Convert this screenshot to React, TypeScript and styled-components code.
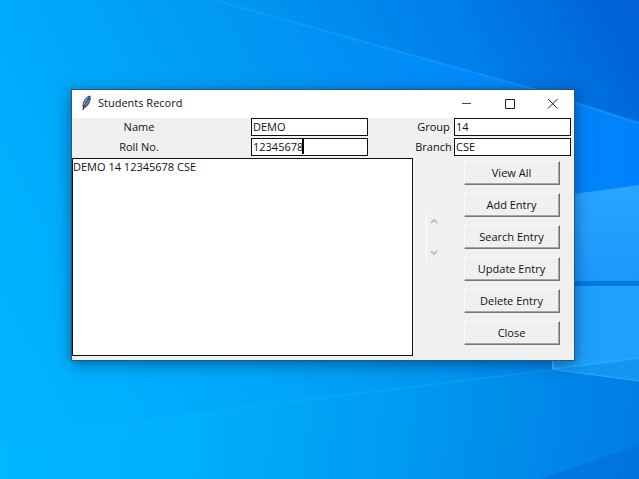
import React, { useState } from "react";
import styled, { createGlobalStyle } from "styled-components";

const GlobalStyle = createGlobalStyle`
  *, *::before, *::after { box-sizing: border-box; }
  body { margin: 0; }
  body, button, input, select {
    font-family: "Open Sans", "Noto Sans", sans-serif;
    font-size: 11px;
    line-height: 16px;
    color: #111;
  }
`;

const Desktop = styled.main`
  position: relative;
  min-height: 100vh;
  padding: 89px 64px 64px 71px;
  overflow: hidden;
  background: #0098f4;
`;

const Wallpaper = styled.svg`
  position: absolute;
  inset: 0;
  width: 100%;
  height: 100%;
`;

const Window = styled.section`
  position: relative;
  display: flex;
  flex-direction: column;
  border: 1px solid #24587c;
  background: #f0f0f0;
  box-shadow: 0 3px 14px rgba(0, 25, 70, 0.5);
`;

const TitleBar = styled.header`
  display: flex;
  align-items: center;
  height: 28px;
  padding: 0 0 2px 8px;
  background: #fff;
`;

const Title = styled.h1`
  flex: 1;
  margin: 0 0 0 6px;
  font-size: 11px;
  font-weight: 400;
`;

const CaptionButton = styled.button`
  display: grid;
  place-items: center;
  width: 43px;
  height: 26px;
  padding: 0;
  border: 0;
  background: transparent;
`;

const Body = styled.form`
  display: grid;
  grid-template-columns: 134fr 207fr 41px 117px;
  grid-template-rows: 18px 18px auto;
  row-gap: 2px;
  padding: 0 3px 4px 0;
`;

const FieldLabel = styled.label`
  align-self: center;
  text-align: center;
  white-space: nowrap;
`;

const EntryBox = styled.div`
  position: relative;
  justify-self: center;
  width: 117px;
`;

const Entry = styled.input`
  display: block;
  width: 100%;
  height: 18px;
  padding: 0 1px 2px;
  border: 1px solid #111;
  border-radius: 0;
  outline: 0;
  background: #fff;
`;

const Caret = styled.span`
  position: absolute;
  top: 1px;
  width: 2px;
  height: 15px;
  background: #000;
`;

const RecordList = styled.select`
  grid-column: 1 / 3;
  width: 100%;
  height: 100%;
  padding: 0;
  border: 1px solid #111;
  border-radius: 0;
  outline: 0;
  background: #fff;
  appearance: none;
  overflow: hidden;

  option {
    min-height: 14px;
    padding: 0;
    line-height: 14px;
  }
`;

const ScrollBar = styled.div`
  display: flex;
  flex-direction: column;
  justify-content: space-between;
  align-self: center;
  justify-self: center;
  width: 15px;
  height: 48px;
  margin-bottom: 40px;
  border-left: 1px solid #fff;
`;

const ScrollButton = styled.button`
  display: grid;
  place-items: center;
  width: 14px;
  height: 16px;
  padding: 0;
  border: 0;
  background: transparent;
`;

const Actions = styled.div`
  display: flex;
  flex-direction: column;
  align-items: center;
  gap: 8px;
  padding: 3px 2px 11px 0;
`;

const ActionButton = styled.button`
  width: 96px;
  height: 24px;
  padding: 0;
  border: 1px solid;
  border-color: #fafafa #747474 #747474 #fafafa;
  box-shadow: inset -1px -1px #a4a4a4;
  background: #f0f0f0;
`;

const actions = ["View All", "Add Entry", "Search Entry", "Update Entry", "Delete Entry", "Close"];

function WallpaperArt() {
  return (
    <Wallpaper viewBox="0 0 639 479" preserveAspectRatio="none" aria-hidden="true">
      <defs>
        <linearGradient id="sky" gradientUnits="userSpaceOnUse" x1="0" y1="330" x2="620" y2="0">
          <stop offset="0" stopColor="#00b4ff" />
          <stop offset="0.3" stopColor="#00a6f9" />
          <stop offset="0.55" stopColor="#0094f0" />
          <stop offset="0.8" stopColor="#007ce8" />
          <stop offset="1" stopColor="#0062d4" />
        </linearGradient>
        <linearGradient id="beam" x1="0" y1="0" x2="1" y2="0">
          <stop offset="0" stopColor="#009cfc" stopOpacity="0" />
          <stop offset="0.5" stopColor="#008ffc" stopOpacity="0.8" />
          <stop offset="1" stopColor="#0082fc" />
        </linearGradient>
        <linearGradient id="floor" gradientUnits="userSpaceOnUse" x1="0" y1="400" x2="639" y2="479">
          <stop offset="0" stopColor="#00b8ff" />
          <stop offset="0.3" stopColor="#00b0fa" />
          <stop offset="0.6" stopColor="#009cf2" />
          <stop offset="1" stopColor="#007ce4" />
        </linearGradient>
        <linearGradient id="pane" x1="0" y1="0" x2="0" y2="1">
          <stop offset="0" stopColor="#28a5ff" />
          <stop offset="1" stopColor="#1c98fb" />
        </linearGradient>
      </defs>
      <rect width="639" height="479" fill="url(#sky)" />
      <path d="M214 0 530 88 639 123V360H214Z" fill="url(#beam)" />
      <path d="M214 0 530 88 639 123" fill="none" stroke="#1c9cff" strokeWidth="2" opacity=".6" />
      <path d="M0 441 240 408 552 370 639 381V479H0Z" fill="url(#floor)" />
      <path d="M0 441 240 408 552 370" fill="none" stroke="#14b0ff" strokeWidth="2" opacity=".35" />
      <path d="M552 197 639 185V281H552Z" fill="url(#pane)" />
      <path d="M552 281H639V286H552Z" fill="#0078e6" />
      <path d="M552 286H639V381L552 370Z" fill="#1fa0fd" />
      <path d="M552 370 639 358V381Z" fill="#1694f2" />
      <path d="M553 350V369" fill="none" stroke="#20d0e0" strokeWidth="2" />
      <path d="M553 369 639 358" fill="none" stroke="#20b8f4" strokeWidth="2" opacity=".7" />
      <path d="M553 369 639 381" fill="none" stroke="#20b0fa" />
      <path d="M540 479 639 445V479Z" fill="#0070da" opacity=".7" />
    </Wallpaper>
  );
}

function Feather() {
  return (
    <svg width="12" height="16" viewBox="0 0 12 16" aria-hidden="true">
      <path d="M10 1C6 2 3 6 3 12L4 13C8 11 11 6 10 1Z" fill="#5d83b0" stroke="#1d2d44" strokeWidth=".9" />
      <path d="M9 3C6 6 4 10 3 15" fill="none" stroke="#16202e" strokeWidth="1" />
      <path d="M8 3C6 5 5 7 4 10" fill="none" stroke="#bfd3e8" strokeWidth=".7" />
    </svg>
  );
}

type FieldProps = { id: string; label: string; initial: string; caret?: boolean };

function Field({ id, label, initial, caret }: FieldProps) {
  const [value, setValue] = useState(initial);
  return (
    <>
      <FieldLabel htmlFor={id}>{label}</FieldLabel>
      <EntryBox>
        <Entry id={id} value={value} onChange={(e) => setValue(e.target.value)} />
        {caret && <Caret style={{ left: `calc(1px + ${value.length}ch)` }} />}
      </EntryBox>
    </>
  );
}

export default function App() {
  return (
    <>
      <GlobalStyle />
      <Desktop>
        <WallpaperArt />
        <Window aria-labelledby="window-title">
          <TitleBar>
            <Feather />
            <Title id="window-title">Students Record</Title>
            <CaptionButton type="button" aria-label="Minimize">
              <svg width="11" height="11" viewBox="0 0 11 11"><path d="M1 5.5H10" stroke="#444" /></svg>
            </CaptionButton>
            <CaptionButton type="button" aria-label="Maximize">
              <svg width="11" height="11" viewBox="0 0 11 11">
                <path d="M1.5 1.5H10.5V10.5H1.5Z" fill="none" stroke="#222" />
              </svg>
            </CaptionButton>
            <CaptionButton type="button" aria-label="Close window">
              <svg width="11" height="11" viewBox="0 0 11 11">
                <path d="M1 1 10.5 10.5M10.5 1 1 10.5" stroke="#222" strokeWidth="1" />
              </svg>
            </CaptionButton>
          </TitleBar>
          <Body onSubmit={(e) => e.preventDefault()}>
            <Field id="name" label="Name" initial="DEMO" />
            <Field id="group" label="Group" initial="14" />
            <Field id="roll" label="Roll No." initial="12345678" caret />
            <Field id="branch" label="Branch" initial="CSE" />
            <RecordList size={12} aria-label="Records">
              <option>DEMO 14 12345678 CSE</option>
            </RecordList>
            <ScrollBar>
              <ScrollButton type="button" aria-label="Scroll up">
                <svg width="8" height="6" viewBox="0 0 8 6"><path d="M1 5 4 2 7 5" fill="none" stroke="#b4b4b4" strokeWidth="1.6" /></svg>
              </ScrollButton>
              <ScrollButton type="button" aria-label="Scroll down">
                <svg width="8" height="6" viewBox="0 0 8 6"><path d="M1 1 4 4 7 1" fill="none" stroke="#b4b4b4" strokeWidth="1.6" /></svg>
              </ScrollButton>
            </ScrollBar>
            <Actions>
              {actions.map((name) => (
                <ActionButton key={name} type="button">{name}</ActionButton>
              ))}
            </Actions>
          </Body>
        </Window>
      </Desktop>
    </>
  );
}
